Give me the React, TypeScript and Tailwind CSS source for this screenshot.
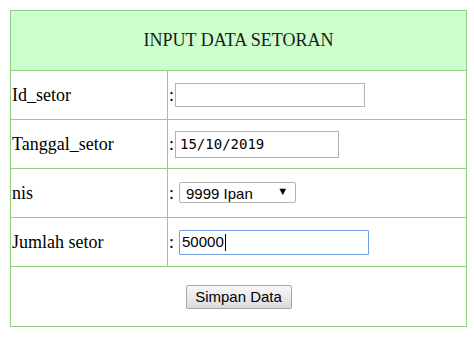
import React from 'react';

const serif = { fontFamily: '"Liberation Serif", "Times New Roman", serif' };
const sans = { fontFamily: '"Liberation Sans", Arial, sans-serif' };

const Row = ({ label, children }: { label: string; children: React.ReactNode }) => (
  <div className="flex h-[49px] border-b border-[#8fd17f]">
    <div className="flex w-[157px] items-center border-r border-[#8fd17f] pl-[1px] text-[18px] text-black" style={serif}>
      {label}
    </div>
    <div className="flex flex-1 items-center pl-[1px] text-[18px] text-black" style={serif}>
      {children}
    </div>
  </div>
);

export default function App() {
  return (
    <div className="min-h-[337px] w-[474px] bg-white pl-[10px] pt-[10px]">
      <div className="w-[457px] border border-[#8fcf80]">
        {/* Header */}
        <div
          className="flex h-[60px] items-center justify-center border-b border-[#8fd17f] bg-[#ccffcc] text-[18px] text-[#1a1a1a]"
          style={serif}
        >
          INPUT DATA SETORAN
        </div>

        <Row label="Id_setor">
          <span>:</span>
          <input
            readOnly
            value=""
            className="ml-[1px] h-[24px] w-[190px] border border-[#b4b4b4] bg-white outline-none"
          />
        </Row>

        <Row label="Tanggal_setor">
          <span>:</span>
          <input
            readOnly
            value="15/10/2019"
            className="ml-[1px] h-[27px] w-[164px] border border-[#b4b4b4] bg-white pl-[4px] text-[14px] text-black outline-none"
            style={{ fontFamily: '"DejaVu Sans Mono", "Liberation Mono", monospace' }}
          />
        </Row>

        <Row label="nis">
          <span className="mr-[5px]">:</span>
          <div className="relative">
            <select
              className="h-[21px] w-[117px] appearance-none rounded-[2px] border border-[#b4b4b4] bg-white pl-[6px] text-[15px] text-black outline-none"
              style={sans}
              defaultValue="9999"
            >
              <option value="9999">9999 Ipan</option>
            </select>
            <span className="pointer-events-none absolute right-[8px] top-[3px] text-[11px] text-black">▼</span>
          </div>
        </Row>

        <Row label="Jumlah setor">
          <span className="mr-[5px]">:</span>
          <div
            className="flex h-[25px] w-[190px] items-center rounded-[1px] border border-[#6f9fe0] bg-white pl-[2px] text-[15px] text-black"
            style={sans}
          >
            50000
            <span className="ml-[1px] h-[17px] w-px bg-black" />
          </div>
        </Row>

        {/* Button row */}
        <div className="flex h-[59px] items-center justify-center">
          <button
            className="h-[24px] w-[106px] rounded-[2px] border border-[#a6a6a6] bg-gradient-to-b from-[#f7f7f7] to-[#dcdcdc] text-[15px] text-black"
            style={sans}
          >
            Simpan Data
          </button>
        </div>
      </div>
    </div>
  );
}
